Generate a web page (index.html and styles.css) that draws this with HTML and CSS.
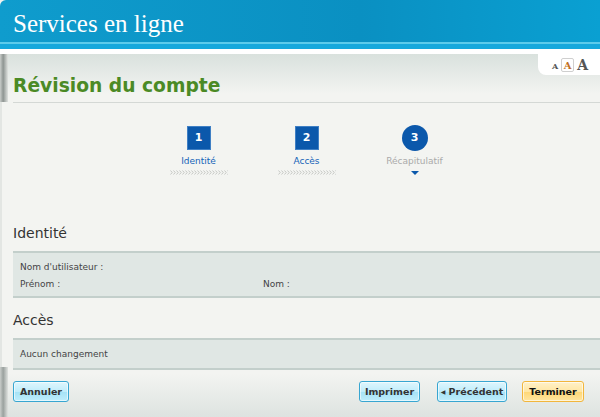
FILE: index.html
```html
<!DOCTYPE html>
<html lang="fr">
<head>
    <meta charset="UTF-8">
    <title>Services en ligne</title>
    <link rel="stylesheet" href="styles.css">
</head>
<body>
    <div id="top-bar">
        <h1>Services en ligne</h1>
    </div>
    <div id="page">
        <div id="font-size">
            <span class="fs-small">A</span>
            <span class="fs-mid">A</span>
            <span class="fs-big">A</span>
        </div>
        <h2 class="page-title">Révision du compte</h2>

        <ol class="steps">
            <li class="step done">
                <span class="num">1</span>
                <span class="label">Identité</span>
                <svg class="chev" width="58" height="5"><defs><pattern id="ch" width="3" height="5" patternUnits="userSpaceOnUse"><polyline points="0.5,0.5 2.2,2.5 0.5,4.5" fill="none" stroke="#b9bcb8" stroke-width="0.8"/></pattern></defs><rect width="58" height="5" fill="url(#ch)"/></svg>
            </li>
            <li class="step done">
                <span class="num">2</span>
                <span class="label">Accès</span>
                <svg class="chev" width="58" height="5"><rect width="58" height="5" fill="url(#ch)"/></svg>
            </li>
            <li class="step current">
                <span class="num">3</span>
                <span class="label">Récapitulatif</span>
                <span class="arrow"></span>
            </li>
        </ol>

        <div class="section">
            <h3>Identité</h3>
            <div class="box">
                <div class="row"><span>Nom d'utilisateur :</span></div>
                <div class="row"><span class="col">Prénom :</span><span>Nom :</span></div>
            </div>
        </div>

        <div class="section">
            <h3>Accès</h3>
            <div class="box">
                <div class="row">Aucun changement</div>
            </div>
        </div>

        <div class="actions">
            <button class="btn b-cancel">Annuler</button>
            <div class="right">
                <button class="btn b-print">Imprimer</button>
                <button class="btn b-prev"><span class="tri">&#9664;</span> Précédent</button>
                <button class="btn orange b-end">Terminer</button>
            </div>
        </div>
    </div>
</body>
</html>
```

FILE: styles.css
```css
*{
    margin: 0;
    padding: 0;
}
ol{
    list-style: none;
}
body{
    width: 600px;
    height: 417px;
    overflow: hidden;
    background: #f2f3f0;
    font-family: "DejaVu Sans", Verdana, sans-serif;
    color: #333;
}
#top-bar{
    height: 49px;
    background:
        linear-gradient(to bottom, transparent 42px, #5ccbeb 42px, #5ccbeb 44px, #16a8dc 44px),
        linear-gradient(to right, #0f9ccd, #0a90c2 60%, #0aa0d2);
    border-radius: 6px 0 0 0;
    border-bottom: 5px solid #fff;
}
#top-bar h1{
    font-family: "Liberation Serif", Georgia, serif;
    font-weight: normal;
    font-size: 25px;
    color: #fff;
    line-height: 47px;
    padding-left: 13px;
}
#page{
    position: relative;
    height: 363px;
    padding: 0 0 0 11px;
    background:
        linear-gradient(to bottom, #d9e1dd, #f3f4f1 40px, #f3f4f1 320px, #dde3e0);
    border-left: 2px solid #e3e6e3;
}
#page:before{
    content: "";
    position: absolute;
    left: -2px;
    top: 0;
    width: 8px;
    height: 48px;
    background: linear-gradient(to right, #c9cdca, #8e9592 40%, #e0e3e0);
}
#page:after{
    content: "";
    position: absolute;
    left: -2px;
    bottom: 0;
    width: 8px;
    height: 50px;
    background: linear-gradient(to right, #c9cdca, #9aa19e 40%, #e0e3e0);
}
#font-size{
    position: absolute;
    right: 0;
    top: 0;
    width: 48px;
    height: 21px;
    padding-left: 14px;
    background: #fff;
    border-radius: 0 0 0 8px;
    font-family: "DejaVu Serif", Georgia, serif;
    font-weight: bold;
    color: #555;
    display: flex;
    align-items: center;
    gap: 3px;
}
.fs-small{
    font-size: 8px;
    margin-top: 3px;
}
.fs-mid{
    font-size: 10px;
    color: #c2701e;
    border: 1px solid #cfcfcf;
    border-radius: 2px;
    width: 11px;
    height: 12px;
    line-height: 13px;
    text-align: center;
}
.fs-big{
    font-size: 14px;
}
.page-title{
    font-size: 18.7px;
    font-weight: bold;
    color: #4b8a25;
    padding-top: 21px;
    height: 27px;
    border-bottom: 1px solid #d4d8d5;
}
.steps{
    display: flex;
    justify-content: center;
    padding-top: 23px;
    height: 99px;
}
.step{
    width: 108px;
    display: flex;
    flex-direction: column;
    align-items: center;
}
.num{
    box-sizing: border-box;
    width: 24px;
    height: 24px;
    background: #0b58ab;
    border: 1px solid #3f7fc4;
    color: #fff;
    font-weight: bold;
    font-size: 11px;
    line-height: 22px;
    text-align: center;
}
.current .num{
    width: 26px;
    height: 26px;
    line-height: 26px;
    border: none;
    border-radius: 50%;
    margin-top: -1px;
}
.label{
    font-size: 9px;
    color: #1463b8;
    margin-top: 5px;
    line-height: 12px;
}
.current .label{
    color: #aaa;
    margin-top: 4px;
}
.chev{
    margin-top: 3px;
}
.arrow{
    margin-top: 4px;
    border-left: 4px solid transparent;
    border-right: 4px solid transparent;
    border-top: 4px solid #0b58ab;
}
.section h3{
    font-weight: normal;
    font-size: 14px;
    line-height: 17px;
    color: #333;
    height: 26px;
}
.section + .section{
    margin-top: 14px;
}
.section + .section .box{
    padding-bottom: 2px;
}
.box{
    background: #e0e7e4;
    border-top: 2px solid #c3cfcb;
    border-bottom: 2px solid #c3cfcb;
    padding: 9px 0 0 7px;
    font-size: 9px;
    color: #444;
}
.row{
    height: 17px;
    line-height: 11px;
    display: flex;
}
.col{
    width: 243px;
}
.actions{
    display: flex;
    justify-content: space-between;
    padding-right: 16px;
    margin-top: 11px;
}
.right{
    display: flex;
}
.btn{
    font-family: "DejaVu Sans", Verdana, sans-serif;
    font-weight: bold;
    font-size: 9.5px;
    color: #333;
    height: 21px;
    padding: 0;
    border: 1px solid #38a6d1;
    border-radius: 3px;
    background: linear-gradient(to bottom, #dff6fd, #c0edfb 50%, #a5e2f6 52%, #bfeefc);
    box-shadow: inset 0 0 0 1px rgba(255,255,255,0.6);
}
.b-cancel{
    width: 56px;
}
.b-print{
    width: 61px;
}
.b-prev{
    width: 70px;
    margin-left: 17px;
}
.b-end{
    width: 62px;
    margin-left: 15px;
}
.btn.orange{
    border-color: #f2b63c;
    background: linear-gradient(to bottom, #fff1c9, #ffe6a2 50%, #ffd776 52%, #ffe6a0);
    color: #111;
}
.tri{
    font-size: 6px;
    vertical-align: 1px;
}
```
